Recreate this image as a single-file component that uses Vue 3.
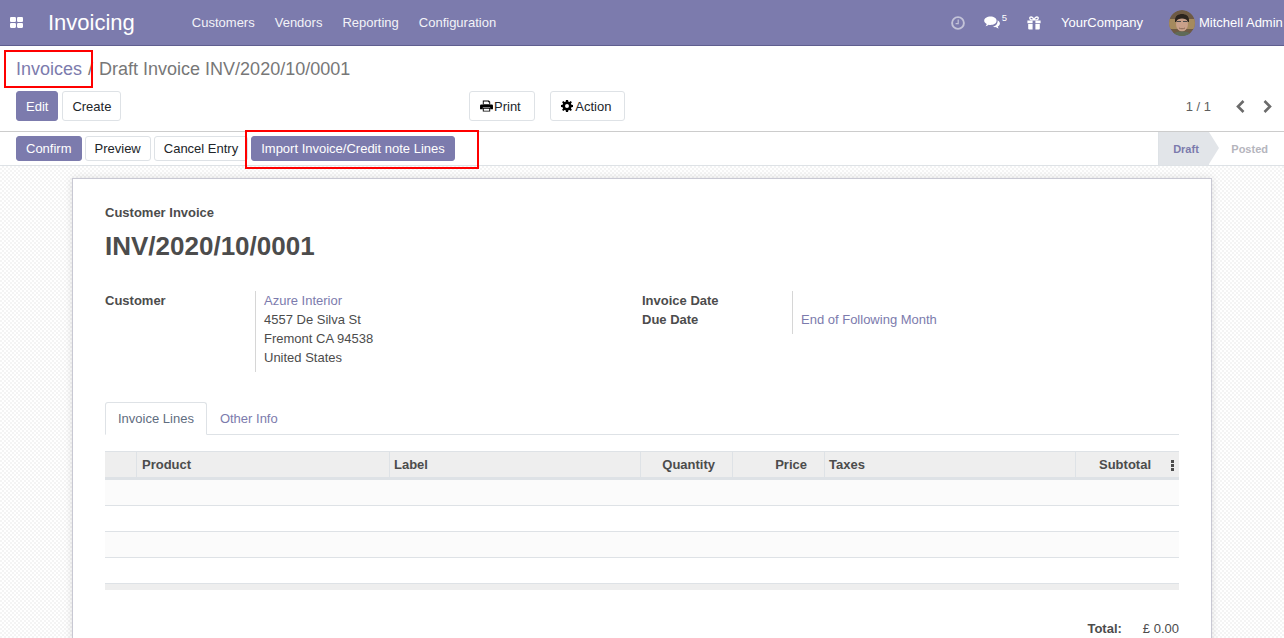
<template>
  <div class="page">
    <header class="navbar">
      <svg class="apps" viewBox="0 0 12 10" width="13" height="11">
        <rect x="0" y="0" width="5.5" height="4.5" rx="1" />
        <rect x="6.5" y="0" width="5.5" height="4.5" rx="1" />
        <rect x="0" y="5.5" width="5.5" height="4.5" rx="1" />
        <rect x="6.5" y="5.5" width="5.5" height="4.5" rx="1" />
      </svg>
      <span class="brand">Invoicing</span>
      <nav class="menu">
        <a v-for="item in menu" :key="item">{{ item }}</a>
      </nav>
      <div class="systray">
        <svg class="clock" viewBox="0 0 14 14" width="14" height="14">
          <circle cx="7" cy="7" r="5.9" fill="none" stroke="#c3c3d8" stroke-width="1.9" />
          <path d="M7.2 3.6V7.6H4.6" fill="none" stroke="#c3c3d8" stroke-width="1.2" />
        </svg>
        <span class="chat">
          <svg viewBox="0 0 16 13" width="16" height="13">
            <path d="M6.5 0.5C10 0.5 12.6 2.3 12.6 4.7S10 8.9 6.5 8.9C5.8 8.9 5.2 8.8 4.6 8.7 3.7 9.5 2.7 10 1.5 10.2 2.1 9.5 2.6 8.7 2.7 7.9 1.2 7.1 0.2 6 0.2 4.7 0.2 2.3 3 0.5 6.5 0.5Z" fill="#fff" />
            <path d="M13.6 4.2C15 5 15.9 6.1 15.9 7.4 15.9 8.7 15 9.8 13.7 10.5 13.8 11.2 14.2 11.9 14.8 12.5 13.6 12.3 12.6 11.8 11.8 11.1 10.8 11.2 9.6 11 8.6 10.5 11.6 10.3 14 8 13.6 4.2Z" fill="#fff" />
          </svg>
          <sup>5</sup>
        </span>
        <svg class="gift" viewBox="0 0 14 14" width="14" height="14">
          <path d="M0.4 4.4H5.6V7.2H0.4ZM8.4 4.4H13.6V7.2H8.4ZM1.2 8H5.6V13.4H2.2A1 1 0 0 1 1.2 12.4ZM8.4 8H12.8V12.4A1 1 0 0 1 11.8 13.4H8.4Z" fill="#fff" />
          <path d="M7 3.8C5.8 1 4.4 0.8 3.4 1.2 2.4 1.7 2.7 3.6 4.2 3.8ZM7 3.8C8.2 1 9.6 0.8 10.6 1.2 11.6 1.7 11.3 3.6 9.8 3.8Z" fill="none" stroke="#fff" stroke-width="1.3" />
        </svg>
        <span class="company">YourCompany</span>
        <svg class="avatar" viewBox="0 0 26 26" width="26" height="26">
          <circle cx="13" cy="13" r="13" fill="#6e5a44" />
          <path d="M0 9H26V19H0Z" fill="#a58a5e" />
          <path d="M6 10C6 2 20 2 20 10V12H6Z" fill="#2c241e" />
          <ellipse cx="13" cy="14" rx="6" ry="7.500" fill="#c9a08a" />
          <path d="M7 11C9 7.500 17 7.500 19 11L19 7C17 4 9 4 7 7Z" fill="#2c241e" />
          <path d="M8 11.500H12M14 11.500H18" stroke="#4a4a4a" stroke-width="1" />
          <path d="M10 18C12 19 14 19 16 18" stroke="#8c6a58" stroke-width="1" fill="none" />
          <path d="M3 26C5 22 9 21.500 13 21.500S21 22 23 26Z" fill="#5f6a58" />
        </svg>
        <span class="user">Mitchell Admin</span>
      </div>
    </header>

    <section class="control">
      <div class="crumbs">
        <a>Invoices</a><span class="sep">/</span><span>Draft Invoice INV/2020/10/0001</span>
      </div>
      <div class="actions">
        <div class="group">
          <button class="btn primary tall">Edit</button>
          <button class="btn tall">Create</button>
        </div>
        <div class="middle">
          <button class="btn tall print">
            <svg viewBox="0 0 14 13" width="13" height="12">
              <path d="M3 0.500H9.500L11 2V5H3ZM4 1.500V4.200H10V2.500H8.800V1.500Z" fill-rule="evenodd" />
              <path d="M0 6.200A1.200 1.200 0 0 1 1.200 5H12.800A1.200 1.200 0 0 1 14 6.200V10H11V8H3V10H0Z" />
              <path d="M3 8.700H11V12.500H3ZM4 9.600V11.600H10V9.600Z" fill-rule="evenodd" />
            </svg>
            Print
          </button>
          <button class="btn tall action">
            <svg viewBox="0 0 14 14" width="12" height="12">
              <path d="M5.800 0H8.200L8.600 1.900 9.800 2.400 11.400 1.300 12.700 2.600 11.600 4.200 12.100 5.400 14 5.800V8.200L12.100 8.600 11.600 9.800 12.700 11.400 11.400 12.700 9.800 11.600 8.600 12.100 8.200 14H5.800L5.400 12.100 4.200 11.600 2.600 12.700 1.300 11.400 2.400 9.800 1.900 8.600 0 8.200V5.800L1.900 5.400 2.400 4.200 1.300 2.600 2.600 1.300 4.200 2.400 5.400 1.900ZM7 4.700A2.300 2.300 0 1 0 7 9.300 2.300 2.300 0 1 0 7 4.700Z" fill-rule="evenodd" />
            </svg>
            Action
          </button>
        </div>
        <div class="pager">
          <span class="count">1 / 1</span>
          <svg viewBox="0 0 9 13" width="9" height="13"><path d="M7.500 1L2 6.500 7.500 12" /></svg>
          <svg viewBox="0 0 9 13" width="9" height="13"><path d="M1.500 1L7 6.500 1.500 12" /></svg>
        </div>
      </div>
    </section>

    <section class="statusrow">
      <div class="group small">
        <button class="btn primary">Confirm</button>
        <button class="btn">Preview</button>
        <button class="btn">Cancel Entry</button>
        <button class="btn primary">Import Invoice/Credit note Lines</button>
      </div>
      <div class="states">
        <span class="state current">Draft</span>
        <span class="state">Posted</span>
      </div>
    </section>

    <main class="content">
      <div class="sheet">
        <div class="kind">Customer Invoice</div>
        <h1>INV/2020/10/0001</h1>

        <div class="info">
          <div class="info-col left">
            <div class="labels"><div>Customer</div></div>
            <div class="values">
              <a>Azure Interior</a>
              <div>4557 De Silva St</div>
              <div>Fremont CA 94538</div>
              <div>United States</div>
            </div>
          </div>
          <div class="info-col right">
            <div class="labels">
              <div>Invoice Date</div>
              <div>Due Date</div>
            </div>
            <div class="values">
              <div>&nbsp;</div>
              <a>End of Following Month</a>
            </div>
          </div>
        </div>

        <div class="tabs">
          <span class="tab active">Invoice Lines</span>
          <span class="tab">Other Info</span>
        </div>

        <table class="lines">
          <thead>
            <tr>
              <th class="c-handle"></th>
              <th class="c-product">Product</th>
              <th class="c-label">Label</th>
              <th class="c-num">Quantity</th>
              <th class="c-num">Price</th>
              <th class="c-taxes">Taxes</th>
              <th class="c-sub">
                Subtotal
                <svg class="dots" viewBox="0 0 3 11" width="3" height="11">
                  <rect y="0" width="3" height="3" />
                  <rect y="4" width="3" height="3" />
                  <rect y="8" width="3" height="3" />
                </svg>
              </th>
            </tr>
          </thead>
          <tbody>
            <tr v-for="n in 4" :key="n"><td colspan="7"></td></tr>
          </tbody>
          <tfoot>
            <tr><td colspan="7"></td></tr>
          </tfoot>
        </table>

        <div class="total">
          <span class="total-label">Total:</span>
          <span>£ 0.00</span>
        </div>
      </div>
    </main>

    <div class="mark mark-crumb"></div>
    <div class="mark mark-import"></div>
  </div>
</template>

<script setup>
const menu = ["Customers", "Vendors", "Reporting", "Configuration"];
</script>

<style>
html,
body {
  margin: 0;
  overflow: hidden;
}
</style>

<style scoped>
.page {
  position: relative;
  height: 638px;
  display: flex;
  flex-direction: column;
  overflow: hidden;
  font-family: "Liberation Sans", Arial, sans-serif;
  font-size: 13px;
  color: #4c4c4c;
  background: #fff;
}

.navbar {
  flex: none;
  height: 45px;
  display: flex;
  align-items: center;
  background: #7c7bad;
  border-bottom: 1px solid #5f5e8f;
  color: #fff;
}

.apps {
  margin-left: 10px;
  fill: #fff;
}

.brand {
  margin-left: 25px;
  font-size: 22px;
}

.menu {
  margin-left: 47px;
  display: flex;
}

.menu a {
  padding: 0 10px;
  color: #f3f3f8;
}

.systray {
  margin-left: auto;
  display: flex;
  align-items: center;
}

.chat {
  margin-left: 19px;
  display: flex;
  align-items: center;
}

.chat sup {
  margin: -9px 0 0 2px;
  font-size: 9.500px;
  line-height: 1;
}

.gift {
  margin-left: 20px;
}

.company {
  margin-left: 20px;
}

.avatar {
  margin-left: 26px;
  border-radius: 50%;
}

.user {
  margin-left: 4px;
  width: 85px;
  white-space: nowrap;
}

.control {
  flex: none;
  height: 86px;
  box-sizing: border-box;
  padding: 11px 0 0 16px;
  border-bottom: 1px solid #ccc;
}

.crumbs {
  font-size: 18px;
  line-height: 24px;
  color: #777;
}

.crumbs a {
  color: #7c7bad;
}

.sep {
  margin: 0 6px;
}

.actions {
  margin-top: 10px;
  display: grid;
  grid-template-columns: 453px 1fr auto;
}

.group {
  display: flex;
  gap: 4px;
}

.small {
  gap: 3px;
}

.btn {
  box-sizing: border-box;
  height: 25px;
  padding: 0 9px;
  border: 1px solid #dee2e6;
  border-radius: 3px;
  background: #fff;
  color: #212529;
  font: inherit;
}

.tall {
  height: 30px;
}

.primary {
  border-color: #7c7bad;
  background: #7c7bad;
  color: #fff;
}

.middle {
  display: flex;
  gap: 15px;
}

.print,
.action {
  display: flex;
  align-items: center;
  gap: 2px;
}

.print {
  gap: 1px;
  padding: 0 13.500px 0 10px;
}

.action {
  padding: 0 13px 0 10px;
}

.pager {
  display: flex;
  align-items: center;
  padding-right: 12px;
}

.count {
  margin-right: 25px;
  color: #5e5e5e;
}

.pager svg {
  fill: none;
  stroke: #6b6b6b;
  stroke-width: 2.600;
}

.pager svg + svg {
  margin-left: 18px;
}

.statusrow {
  flex: none;
  height: 34px;
  box-sizing: border-box;
  display: flex;
  align-items: flex-start;
  justify-content: space-between;
  padding: 4px 0 0 16px;
  border-bottom: 1px solid #dee2e6;
}

.states {
  display: flex;
  margin-top: -4px;
  height: 33px;
  font-size: 11px;
  font-weight: bold;
}

.state {
  position: relative;
  display: flex;
  align-items: center;
  color: #b5b5bd;
  padding: 0 16px 0 21px;
}

.current {
  padding: 0 10.500px 0 14px;
  margin-right: 1px;
  background: #e2e5e9;
  border-left: 1px solid #dee2e6;
  color: #7c7bad;
}

.current::after {
  content: "";
  position: absolute;
  top: 0;
  left: 100%;
  border-style: solid;
  border-width: 16.500px 0 16.500px 10px;
  border-color: transparent transparent transparent #e2e5e9;
}

.content {
  flex: 1;
  padding: 12px 72px 0 72px;
  background-color: #fff;
  background-image: conic-gradient(#f4f4f4 25%, #fff 0 50%, #f4f4f4 0 75%, #fff 0);
  background-size: 4px 4px;
}

.sheet {
  box-sizing: border-box;
  height: 600px;
  padding: 26px 32px 0;
  border: 1px solid #c8c8d3;
  background: #fff;
  box-shadow: 0 0 8px rgba(0, 0, 0, 0.12);
}

.kind {
  font-weight: bold;
  line-height: 15px;
}

h1 {
  margin: 10px 0 0;
  font-size: 26px;
  line-height: 32px;
  font-weight: bold;
}

.info {
  margin-top: 29px;
  display: grid;
  grid-template-columns: 537px 1fr;
  line-height: 19px;
}

.info-col {
  display: grid;
  grid-template-columns: 150px 1fr;
  align-items: start;
}

.labels {
  font-weight: bold;
}

.values {
  padding: 0 0 5px 8px;
  border-left: 1px solid #d6d6d6;
}

a {
  color: #7c7bad;
}

.values a {
  display: block;
}

.tabs {
  margin-top: 30px;
  height: 32px;
  display: flex;
  border-bottom: 1px solid #dee2e6;
}

.tab {
  box-sizing: border-box;
  height: 32px;
  padding: 0 12px 0 13px;
  line-height: 33px;
  color: #7c7bad;
}

.active {
  height: 33px;
  padding: 0 12px;
  line-height: 32px;
  border: 1px solid #dee2e6;
  border-bottom-color: #fff;
  border-radius: 3px 3px 0 0;
  background: #fff;
  color: #5f6d80;
}

.lines {
  margin-top: 16px;
  width: 100%;
  table-layout: fixed;
  border-collapse: collapse;
}

.lines th {
  height: 25px;
  padding: 0 6px 0 4px;
  background: #eee;
  border-top: 1px solid #dee2e6;
  border-bottom: 3px solid #dee2e6;
  border-left: 1px solid #dee2e6;
  font-weight: bold;
  text-align: left;
}

.lines th:first-child {
  border-left: 0;
}

.lines th.c-product {
  padding-left: 5px;
}

.c-handle {
  width: 21px;
}

.c-product {
  width: 241px;
}

.c-label,
.c-taxes {
  width: 240px;
}

.c-num {
  width: 70px;
}

.lines th.c-num,
.lines th.c-sub {
  text-align: right;
}

.lines th.c-num {
  padding-right: 17px;
}

.lines th.c-sub {
  position: relative;
  padding-right: 28px;
}

.dots {
  position: absolute;
  top: 8px;
  right: 5px;
  fill: #4c4c4c;
}

.lines tbody td {
  height: 25px;
  padding: 0;
  border-bottom: 1px solid #dee2e6;
}

.lines tbody tr:nth-child(odd) td {
  background: #fbfbfb;
}

.lines tfoot td {
  height: 6px;
  padding: 0;
  background: #eee;
}

.total {
  margin-top: 31px;
  display: flex;
  justify-content: flex-end;
  gap: 21px;
}

.total-label {
  font-weight: bold;
}

.mark {
  position: absolute;
  box-sizing: border-box;
  border: 2px solid #f00;
}

.mark-crumb {
  left: 4px;
  top: 50px;
  width: 89px;
  height: 38px;
}

.mark-import {
  left: 245px;
  top: 130px;
  width: 234px;
  height: 39px;
}
</style>
